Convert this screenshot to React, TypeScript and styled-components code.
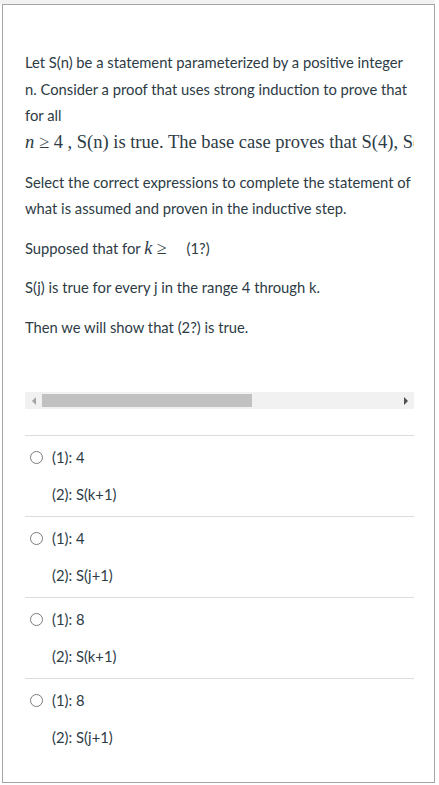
import React from "react";
import styled, { createGlobalStyle } from "styled-components";

const Global = createGlobalStyle`
  html, body { margin: 0; padding: 0; background: #ffffff; }
  body { font-family: Lato, "Open Sans", "Liberation Sans", sans-serif; color: #2d3b45; }
`;

const TopStrip = styled.div`
  width: 435px;
  height: 4px;
  background: #f2f2f2;
`;

const Card = styled.div`
  box-sizing: border-box;
  width: 433px;
  margin-left: 2px;
  border: 1px solid #a4a4a4;
  padding: 44px 20px 23px 22px;
`;

const QuestionText = styled.div`
  overflow: hidden;
  font-size: 14.75px;
  line-height: 26.5px;
`;

const Para = styled.p<{ $gapAfter?: number }>`
  margin: 0 0 ${(p) => (p.$gapAfter ?? 13)}px 0;
`;

const MathLine = styled.span`
  display: inline-block;
  white-space: nowrap;
  font-family: "Liberation Serif", "DejaVu Serif", serif;
  font-size: 18.5px;
  line-height: 27px;
  color: #2d3b45;
`;

const MathInline = styled.span`
  font-family: "Liberation Serif", "DejaVu Serif", serif;
  font-size: 18px;
  line-height: 20px;
`;

const Var = styled.i`
  font-family: "Liberation Serif", "DejaVu Serif", serif;
  font-style: italic;
`;

const Blank = styled.span`
  margin-left: 20px;
`;

const Scrollbar = styled.div`
  display: flex;
  align-items: center;
  height: 17px;
  background: #f1f1f1;
  margin-top: 52px;
`;

const ArrowButton = styled.div<{ $dir: "left" | "right"; $color: string }>`
  width: 17px;
  height: 17px;
  display: flex;
  align-items: center;
  justify-content: center;
  &::before {
    content: "";
    width: 0;
    height: 0;
    border-top: 4px solid transparent;
    border-bottom: 4px solid transparent;
    ${(p) =>
      p.$dir === "left"
        ? `border-right: 4px solid ${p.$color};`
        : `border-left: 4px solid ${p.$color};`}
  }
`;

const Thumb = styled.div`
  width: 210px;
  height: 13px;
  background: #c1c1c1;
`;

const Spacer = styled.div`
  flex: 1;
`;

const Answers = styled.div`
  margin-top: 26px;
`;

const Answer = styled.div`
  border-top: 1px solid #dcdcdc;
  padding: 8px 0 9px 0;
  display: flex;
  flex-direction: column;
  gap: 11px;
  font-size: 14.75px;
  line-height: 26px;
`;

const AnswerRow = styled.div`
  display: flex;
  align-items: center;
  padding-left: 27px;
  position: relative;
`;

const Radio = styled.span`
  position: absolute;
  left: 5px;
  top: 6.5px;
  box-sizing: border-box;
  width: 13px;
  height: 13px;
  border: 1px solid #7a7a7a;
  border-radius: 50%;
  background: #fff;
`;

const answers = [
  { a: "4", b: "S(k+1)" },
  { a: "4", b: "S(j+1)" },
  { a: "8", b: "S(k+1)" },
  { a: "8", b: "S(j+1)" },
];

export default function App() {
  return (
    <>
      <Global />
      <TopStrip />
      <Card>
        <QuestionText>
          <Para>
            Let S(n) be a statement parameterized by a positive integer n. Consider a proof that uses
            strong induction to prove that for all{" "}
            <MathLine>
              <Var>n</Var>&nbsp;≥&nbsp;4&nbsp;,&nbsp;S(n) is true. The base case proves that S(4), S(5), S(6)
              and S(7) are all true.
            </MathLine>
          </Para>
          <Para>
            Select the correct expressions to complete the statement of what is assumed and proven in
            the inductive step.
          </Para>
          <Para>
            Supposed that for{" "}
            <MathInline>
              <Var>k</Var> ≥
            </MathInline>
            <Blank>(1?)</Blank>
          </Para>
          <Para>S(j) is true for every j in the range 4 through k.</Para>
          <Para $gapAfter={0}>Then we will show that (2?) is true.</Para>
        </QuestionText>
        <Scrollbar>
          <ArrowButton $dir="left" $color="#a3a3a3" />
          <Thumb />
          <Spacer />
          <ArrowButton $dir="right" $color="#505050" />
        </Scrollbar>
        <Answers>
          {answers.map((ans, i) => (
            <Answer key={i}>
              <AnswerRow>
                <Radio />
                (1): {ans.a}
              </AnswerRow>
              <AnswerRow>(2): {ans.b}</AnswerRow>
            </Answer>
          ))}
        </Answers>
      </Card>
    </>
  );
}
